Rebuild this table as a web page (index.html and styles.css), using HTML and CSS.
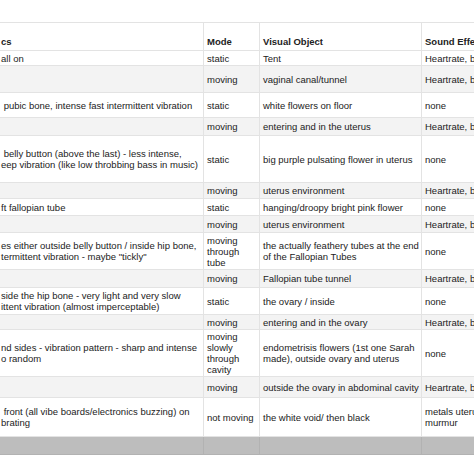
FILE: index.html
```html
<!DOCTYPE html>
<html>
<head>
<meta charset="utf-8">
<link rel="stylesheet" href="styles.css">
</head>
<body>
<div class="sheet">
<table class="grid">
<colgroup>
<col class="c1"><col class="c2"><col class="c3"><col class="c4">
</colgroup>
<thead>
<tr class="hdr"><th>cs</th><th>Mode</th><th>Visual Object</th><th>Sound Effects</th></tr>
</thead>
<tbody>
<tr class="h15"><td>all on</td><td>static</td><td>Tent</td><td>Heartrate, breathing</td></tr>
<tr class="h27 alt"><td></td><td>moving</td><td>vaginal canal/tunnel</td><td>Heartrate, breathing</td></tr>
<tr class="h25"><td>&nbsp;pubic bone, intense fast intermittent vibration</td><td>static</td><td>white flowers on floor</td><td>none</td></tr>
<tr class="h18 alt"><td></td><td>moving</td><td>entering and in the uterus</td><td>Heartrate, breathing</td></tr>
<tr class="h47"><td>&nbsp;belly button (above the last) - less intense,<br>eep vibration (like low throbbing bass in music)</td><td>static</td><td>big purple pulsating flower in uterus</td><td>none</td></tr>
<tr class="h16 alt"><td></td><td>moving</td><td>uterus environment</td><td>Heartrate, breathing</td></tr>
<tr class="h17"><td>ft fallopian tube</td><td>static</td><td>hanging/droopy bright pink flower</td><td>none</td></tr>
<tr class="h17 alt"><td></td><td>moving</td><td>uterus environment</td><td>Heartrate, breathing</td></tr>
<tr class="h37"><td>es either outside belly button / inside hip bone,<br>termittent vibration - maybe "tickly"</td><td class="wrap">moving through tube</td><td>the actually feathery tubes at the end<br>of the Fallopian Tubes</td><td>none</td></tr>
<tr class="h18 alt"><td></td><td>moving</td><td>Fallopian tube tunnel</td><td>Heartrate, breathing</td></tr>
<tr class="h27"><td>side the hip bone - very light and very slow<br>ittent vibration (almost imperceptable)</td><td>static</td><td>the ovary / inside</td><td>none</td></tr>
<tr class="h15 alt"><td></td><td>moving</td><td>entering and in the ovary</td><td>Heartrate, breathing</td></tr>
<tr class="h47"><td>nd sides - vibration pattern - sharp and intense<br>o random</td><td class="wrap">moving slowly through cavity</td><td>endometrisis flowers (1st one Sarah<br>made), outside ovary and uterus</td><td>none</td></tr>
<tr class="h21 alt"><td></td><td>moving</td><td>outside the ovary in abdominal cavity</td><td>Heartrate, breathing</td></tr>
<tr class="h39"><td>&nbsp;front (all vibe boards/electronics buzzing) on<br>brating</td><td>not moving</td><td>the white void/ then black</td><td>metals uterus<br>murmur</td></tr>
<tr class="h18 bar"><td></td><td></td><td></td><td></td></tr>
</tbody>
</table>
</div>
</body>
</html>
```

FILE: styles.css
```css
html, body {
  margin: 0;
  padding: 0;
  background: #ffffff;
  overflow: hidden;
}

.sheet {
  width: 474px;
  height: 474px;
  overflow: hidden;
  padding-top: 22px;
  box-sizing: border-box;
}

.grid {
  border-collapse: collapse;
  table-layout: fixed;
  width: 560px;
  margin-left: -3px;
  font-family: "Liberation Sans", Arial, sans-serif;
  font-size: 9.5px;
  line-height: 11px;
  color: #222222;
}

.c1 { width: 206px; }
.c2 { width: 56px; }
.c3 { width: 162px; }
.c4 { width: 136px; }

.grid th,
.grid td {
  border: 1px solid #e3e3e3;
  padding: 0 2px 0 3px;
  text-align: left;
  vertical-align: middle;
  white-space: nowrap;
  overflow: hidden;
}

.grid th {
  font-weight: bold;
  vertical-align: bottom;
  padding-bottom: 3px;
}

.grid td.wrap {
  white-space: normal;
}

.hdr { height: 28px; }
.h15 { height: 15px; }
.h16 { height: 16px; }
.h17 { height: 17px; }
.h18 { height: 18px; }
.h21 { height: 21px; }
.h25 { height: 25px; }
.h27 { height: 27px; }
.h37 { height: 37px; }
.h39 { height: 39px; }
.h47 { height: 47px; }

.alt td { background: #f3f3f3; }

.bar td {
  background: #bdbdbd;
  border-color: #b2b2b2;
}
```
